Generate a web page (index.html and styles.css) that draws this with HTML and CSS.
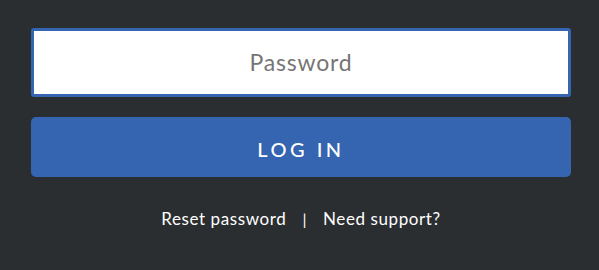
FILE: index.html
```html
<!DOCTYPE html>
<html lang="en">
<head>
    <meta charset="UTF-8">
    <meta name="viewport" content="width=device-width, initial-scale=1.0">
    <title>Log in</title>
    <link rel="stylesheet" href="styles.css">
</head>
<body>
    <div class="login">
        <input class="password-input" type="password" placeholder="Password">
        <button class="login-button" type="button">LOG IN</button>
        <div class="links">
            <a href="#" class="link">Reset password</a>
            <span class="divider">|</span>
            <a href="#" class="link">Need support?</a>
        </div>
    </div>
</body>
</html>
```

FILE: styles.css
```css
* {
    margin: 0;
    padding: 0;
    box-sizing: border-box;
}

body {
    font-family: Lato, "Open Sans", sans-serif;
    background: #2b2e31;
    min-height: 100vh;
}

.login {
    width: 540px;
    margin-left: 31px;
    padding-top: 28px;
    display: flex;
    flex-direction: column;
}

.password-input {
    height: 69px;
    padding-bottom: 2px;
    border: 3px solid #3565b0;
    border-radius: 3px;
    background: #fff;
    font-family: inherit;
    font-size: 23px;
    text-align: center;
    color: #333;
    outline: none;
}

.password-input::placeholder {
    color: #757575;
    letter-spacing: 0.8px;
}

.login-button {
    margin-top: 20px;
    height: 60px;
    padding-top: 3px;
    border: none;
    border-radius: 5px;
    background: #3565b0;
    color: #fff;
    font-family: inherit;
    font-size: 20px;
    font-weight: 500;
    letter-spacing: 3.5px;
    cursor: pointer;
}

.links {
    margin-top: 31px;
    display: flex;
    justify-content: center;
    align-items: center;
    gap: 16px;
    font-size: 17px;
    letter-spacing: 0.6px;
}

.link {
    color: #fff;
    text-decoration: none;
}

.divider {
    color: #fff;
    font-size: 16px;
}
```
